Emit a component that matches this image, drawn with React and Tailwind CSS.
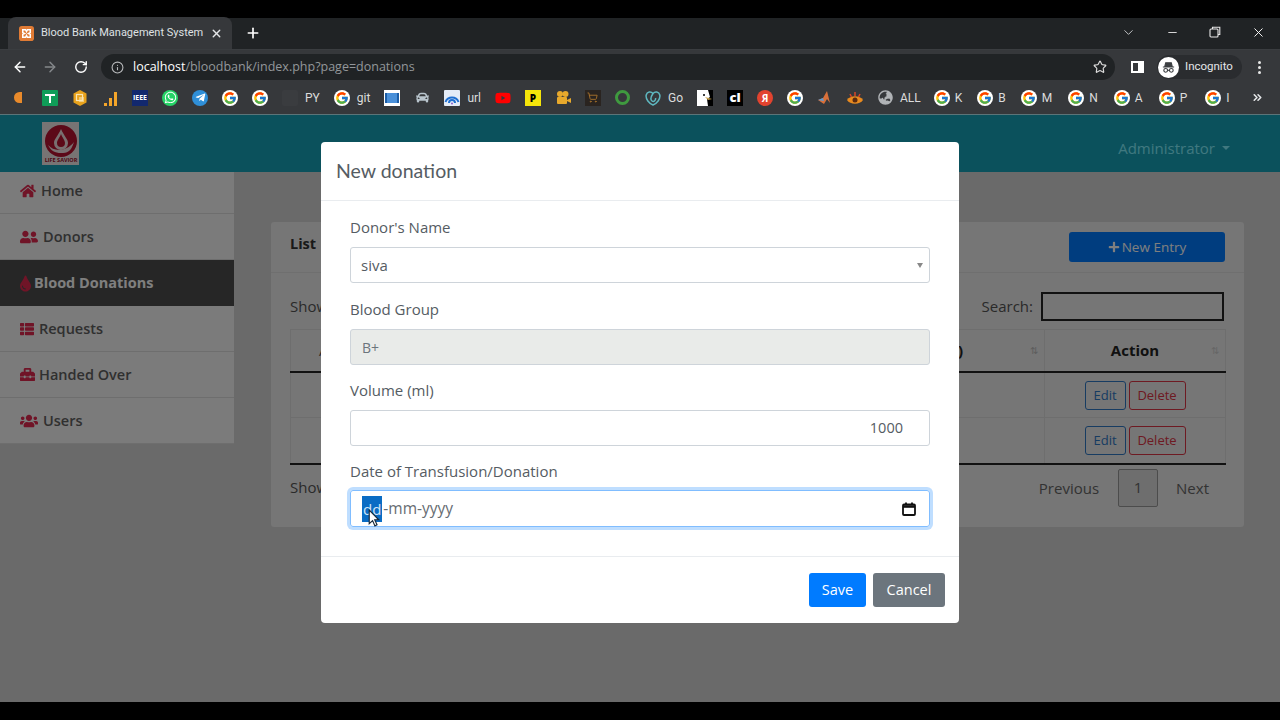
import React from "react";
import { ArrowLeft, ArrowRight, RotateCw, Info, Star, X, Plus, Minus, ChevronDown, ChevronsRight, ShoppingCart } from "lucide-react";
import { FaHome, FaUserFriends, FaTint, FaThList, FaToolbox, FaUsers, FaPlus, FaWhatsapp, FaTelegramPlane, FaYoutube, FaGlobeAsia, FaCar } from "react-icons/fa";
import { FcGoogle } from "react-icons/fc";

function G() {
  return (
    <span className="w-4 h-4 rounded-full bg-white flex items-center justify-center shrink-0">
      <FcGoogle className="w-[14px] h-[14px]" />
    </span>
  );
}

function Box({ className = "", children }) {
  return <span className={"w-4 h-4 flex items-center justify-center shrink-0 " + className}>{children}</span>;
}

function Bm({ children, label, tight, className = "" }) {
  return (
    <div className={"flex items-center shrink-0 " + (tight ? "gap-[7px] " : "gap-[5px] ") + className}>
      {children}
      {label && <span className="text-[12px] leading-4 text-[#dcdcdc] font-['Roboto',sans-serif]">{label}</span>}
    </div>
  );
}

function NavItem({ icon, label, active, first, iconGap = "mr-[5px]" }) {
  return (
    <div
      className={
        "flex items-center pl-[20px] text-[14.5px] " +
        (first ? "h-[42px] pb-[4px] " : "h-[46px] ") +
        (active ? "bg-[#4c4c4c] text-white font-bold" : "bg-[#f6f6f6] text-[#606060] font-semibold border-b border-[#dcdcdc]")
      }
    >
      <span className={"text-[#e0284f] flex items-center " + iconGap}>{icon}</span>
      {label}
    </div>
  );
}

function Label({ children, className = "" }) {
  return <div className={"text-[15px] leading-[21px] text-[#555c63] " + className}>{children}</div>;
}

function ActionCell() {
  return (
    <div className="flex items-center justify-center gap-[3px] pt-[1px]">
      <span className="h-[29px] w-[41px] flex items-center justify-center rounded-[3px] border border-[#2f78c4] text-[#2f78c4] text-[13px]">Edit</span>
      <span className="h-[29px] w-[57px] flex items-center justify-center rounded-[3px] border border-[#dc3545] text-[#dc3545] text-[13px]">Delete</span>
    </div>
  );
}

export default function App() {
  return (
    <div className="w-[1280px] h-[720px] bg-black pt-[18px] pb-[18px] flex flex-col overflow-hidden font-['Open_Sans',sans-serif]">
      {/* tab strip */}
      <div className="h-[32px] bg-[#202325] flex items-end pl-2 pr-[14px] shrink-0 border-b border-[#3a3d40]">
        <div className="h-[32px] w-[224px] bg-[#36383b] rounded-t-lg flex items-center pl-[11px] pr-[9px]">
          <svg viewBox="0 0 16 16" className="w-[15px] h-[15px] shrink-0">
            <rect width="16" height="16" rx="3" fill="#e07b35" />
            <path d="M4 4h3l1 2 1-2h3v3l-2 1 2 1v3H9L8 10l-1 2H4V9l2-1-2-1z" fill="none" stroke="#fff" strokeWidth="1.6" />
          </svg>
          <span className="ml-[7px] pt-px flex-1 text-[11px] text-[#dfe1e3] whitespace-nowrap font-['Roboto',sans-serif]">Blood Bank Management System</span>
          <X className="w-[13px] h-[13px] text-[#e4e6e8]" strokeWidth={2.5} />
        </div>
        <div className="h-[32px] ml-[13px] flex items-center">
          <Plus className="w-[16px] h-[16px] text-white" strokeWidth={2.5} />
        </div>
        <div className="flex-1" />
        <div className="h-[27px] self-start flex items-center gap-[30px] pt-[1px]">
          <ChevronDown className="w-[15px] h-[15px] text-[#c8cacc]" strokeWidth={1.5} />
          <Minus className="w-[13px] h-[13px] text-white" strokeWidth={1.5} />
          <svg viewBox="0 0 12 12" className="w-[12px] h-[12px]" fill="none" stroke="#e8e8e8" strokeWidth="1.1">
            <rect x="1" y="3" width="8" height="8" rx="1" />
            <path d="M3.5 3V1.2h7.3v7.3H9" />
          </svg>
          <X className="w-[15px] h-[15px] text-white" strokeWidth={1.5} />
        </div>
      </div>

      {/* toolbar */}
      <div className="h-[31px] pt-[3px] bg-[#36383b] flex items-center pl-[12px] shrink-0">
        <ArrowLeft className="w-[16px] h-[16px] text-white" strokeWidth={2.2} />
        <ArrowRight className="w-[16px] h-[16px] text-[#85888b] ml-[14px]" strokeWidth={2.2} />
        <RotateCw className="w-[14px] h-[14px] text-white ml-[16px]" strokeWidth={2.4} />
        <div className="ml-[13px] h-[26px] w-[1014px] rounded-full bg-[#202325] flex items-center pl-[10px] pr-[8px]">
          <Info className="w-[13px] h-[13px] text-[#b8babc]" strokeWidth={2} />
          <span className="ml-[9px] text-[12.5px] text-white">localhost</span>
          <span className="text-[12.5px] text-[#93979a]">/bloodbank/index.php?page=donations</span>
          <div className="flex-1" />
          <Star className="w-[14px] h-[14px] text-[#dcdcdc]" strokeWidth={2} />
        </div>
        <div className="ml-[16px] w-[13px] h-[12px] border-2 border-white flex justify-end">
          <div className="w-[4px] bg-white" />
        </div>
        <div className="ml-[13px] h-[24px] w-[85px] rounded-full bg-[#2a2c2f] flex items-center">
          <span className="w-[21px] h-[21px] ml-[1px] rounded-full bg-white flex items-center justify-center shrink-0">
            <svg viewBox="0 0 16 16" className="w-[15px] h-[15px]" fill="none" stroke="#3c3f42" strokeWidth="1.2">
              <path d="M4 7l1-4h6l1 4z M2 7.5h12" fill="#3c3f42" />
              <circle cx="5" cy="11" r="2" />
              <circle cx="11" cy="11" r="2" />
              <path d="M7 11h2" />
            </svg>
          </span>
          <span className="ml-[6px] text-[11.5px] text-[#e4e6e8] font-['Roboto',sans-serif]">Incognito</span>
        </div>
        <div className="ml-[16px] flex flex-col gap-[2px]">
          <span className="w-[3px] h-[3px] rounded-full bg-[#e8e8e8]" />
          <span className="w-[3px] h-[3px] rounded-full bg-[#e8e8e8]" />
          <span className="w-[3px] h-[3px] rounded-full bg-[#e8e8e8]" />
        </div>
      </div>

      {/* bookmarks */}
      <div className="h-[34px] bg-[#36383b] border-b border-[#5c7478] flex items-center pl-[10px] gap-[14px] shrink-0 overflow-hidden">
        <Bm><Box><span className="w-[8px] h-[11px] bg-[#e98a2b] rounded-l-full" /></Box></Bm>
        <Bm className="ml-[2px]">
          <Box className="bg-[#0f9d58] rounded-[1px]">
            <svg viewBox="0 0 16 16" className="w-4 h-4"><path d="M3 5h10M8 5v8" stroke="#fff" strokeWidth="2" /></svg>
          </Box>
        </Bm>
        <Bm>
          <Box>
            <svg viewBox="0 0 16 16" className="w-4 h-4">
              <path d="M8 0l6.5 3.5v9L8 16l-6.5-3.5v-9z" fill="#e8a21c" />
              <rect x="4.5" y="4.5" width="6" height="6" fill="none" stroke="#f8e4b4" strokeWidth="1.2" />
              <rect x="7" y="7" width="5" height="5" fill="#f8e4b4" opacity="0.6" />
            </svg>
          </Box>
        </Bm>
        <Bm>
          <Box className="items-end gap-[2px]">
            <span className="w-[3px] h-[3px] bg-[#f4a52a]" />
            <span className="w-[3px] h-[8px] bg-[#f4a52a]" />
            <span className="w-[3px] h-[14px] bg-[#f4a52a]" />
          </Box>
        </Bm>
        <Bm><Box className="bg-[#12286e]"><span className="text-white text-[7px] font-bold leading-none">IEEE</span></Box></Bm>
        <Bm><Box className="bg-[#25d366] rounded-full"><FaWhatsapp className="w-[13px] h-[13px] text-white" /></Box></Bm>
        <Bm><Box className="bg-[#2f8fd8] rounded-full"><FaTelegramPlane className="w-[11px] h-[11px] text-white" /></Box></Bm>
        <Bm><G /></Bm>
        <Bm><G /></Bm>
        <Bm label="PY" tight><Box className="bg-[#3a3c3f] rounded-[2px]" /></Bm>
        <Bm label="git" tight><G /></Bm>
        <Bm>
          <Box className="bg-white">
            <span className="w-[14px] h-[10px] bg-[#4a90d9] border-x-2 border-[#1d5fa8]" />
          </Box>
        </Bm>
        <Bm><Box><FaCar className="w-[13px] h-[13px] text-[#b8c4cc]" /></Box></Bm>
        <Bm label="url" tight>
          <Box className="bg-[#e4ecf7] rounded-[1px]">
            <svg viewBox="0 0 16 16" className="w-4 h-4" fill="none" stroke="#1f6fd0" strokeWidth="2">
              <path d="M1.5 12a7 7 0 0113 0" />
              <path d="M5 13a3 3 0 016 0" />
              <circle cx="8" cy="13.5" r="1" fill="#8a5fd0" stroke="none" />
            </svg>
          </Box>
        </Bm>
        <Bm><Box><FaYoutube className="w-[16px] h-[16px] text-[#ff0000]" /></Box></Bm>
        <Bm><Box className="bg-[#f5e50a]"><span className="text-black text-[10px] font-extrabold leading-none">P</span></Box></Bm>
        <Bm>
          <Box>
            <svg viewBox="0 0 16 16" className="w-4 h-4" fill="#e8a92c">
              <circle cx="5" cy="4" r="3" />
              <circle cx="10.5" cy="4" r="3" />
              <rect x="2" y="7" width="10" height="7" rx="1" />
              <path d="M12 10l4-2v5l-4-2z" />
            </svg>
          </Box>
        </Bm>
        <Bm><Box className="bg-[#2a2420]"><ShoppingCart className="w-[11px] h-[11px] text-[#a8732c]" /></Box></Bm>
        <Bm><Box><span className="w-[15px] h-[15px] rounded-full border-[3px] border-[#3f9a3f]" /></Box></Bm>
        <Bm label="Go" tight>
          <Box>
            <svg viewBox="0 0 16 16" className="w-4 h-4" fill="none" stroke="#5fb8c0" strokeWidth="1.5">
              <path d="M8 3.5C6 1 2 1.5 1.2 5c-.8 4 3 8.5 6.8 10 3.8-1.5 7.6-6 6.8-10C14 1.5 10 1 8 3.5c-2 3-3 6-1 7.5s4-1 3.5-3" />
            </svg>
          </Box>
        </Bm>
        <Bm>
          <Box className="bg-black">
            <svg viewBox="0 0 16 16" className="w-4 h-4">
              <path d="M0 0h11l2 7-3 2 1 7H0z" fill="#fff" />
              <path d="M8 7l7 2-4 1z" fill="#c9a24a" />
              <circle cx="7" cy="5" r="1" fill="#000" />
            </svg>
          </Box>
        </Bm>
        <Bm><Box className="bg-black"><span className="text-white text-[13px] font-extrabold leading-none">cl</span></Box></Bm>
        <Bm><Box className="bg-[#e2432f] rounded-full"><span className="text-white text-[10px] font-bold leading-none">Я</span></Box></Bm>
        <Bm><G /></Bm>
        <Bm>
          <Box>
            <svg viewBox="0 0 16 16" className="w-4 h-4"><path d="M1 10l5-2 4-7 3 12-3-4-3 5z" fill="#d9703a" /><path d="M1 10l5-2 1 3z" fill="#5f9bd1" /></svg>
          </Box>
        </Bm>
        <Bm>
          <Box>
            <svg viewBox="0 0 16 16" className="w-4 h-4">
              <path d="M0 10c3-5 13-5 16 0-3 5-13 5-16 0z" fill="#e88a1f" />
              <circle cx="8" cy="10" r="2.500" fill="#5a2a10" />
              <path d="M3 4l1.500 3M8 2v4M13 4l-1.500 3" stroke="#d8452a" strokeWidth="1.500" />
            </svg>
          </Box>
        </Bm>
        <Bm label="ALL" tight><Box><FaGlobeAsia className="w-[15px] h-[15px] text-[#b0b3b6]" /></Box></Bm>
        <Bm label="K" className="-ml-[1px]"><G /></Bm>
        <Bm label="B" className="ml-[1px]"><G /></Bm>
        <Bm label="M" className="ml-[1px]"><G /></Bm>
        <Bm label="N" className="ml-[2px]"><G /></Bm>
        <Bm label="A" className="ml-[2px]"><G /></Bm>
        <Bm label="P" className="ml-[2px]"><G /></Bm>
        <Bm label="I" className="ml-[4px]"><G /></Bm>
        <ChevronsRight className="w-[13px] h-[13px] text-[#e4e6e8] ml-[7px] shrink-0" strokeWidth={3} />
      </div>

      {/* page */}
      <div className="relative flex-1 min-h-0 bg-[#d4d4d4] flex flex-col overflow-hidden">
        <div className="h-[57px] bg-[#17a2b8] shrink-0 flex items-center pl-[42px] pr-[50px]">
          <div className="w-[37px] h-[43px] bg-[#f0e8e8] flex items-center justify-center">
            <svg viewBox="0 0 34 40" className="w-[34px] h-[40px]">
              <circle cx="17" cy="17" r="16" fill="#b81230" />
              <path d="M17 5c-3 7-7 10-7 14a7 7 0 0014 0c0-4-4-7-7-14z" fill="#f3dfe0" />
              <path d="M17 10c-1.500 4-4 6-4 9a4 4 0 008 0c0-3-2.500-5-4-9z" fill="#b81230" />
              <path d="M4 21c6 7 18 7 26-3-3 10-7 11-13 11-6 0-10-2-13-8z" fill="#f3dfe0" />
              <text x="17" y="37.500" textAnchor="middle" fontSize="5.500" fontWeight="700" fill="#9c1028">LIFE SAVIOR</text>
            </svg>
          </div>
          <div className="flex-1" />
          <div className="flex items-center pt-[9px]">
            <span className="text-[15px] text-[#80f0ff]">Administrator</span>
            <span className="ml-[7px] w-0 h-0 border-x-[4px] border-x-transparent border-t-[4px] border-t-[#80f0ff]" />
          </div>
        </div>

        <div className="flex flex-1 min-h-0">
          <div className="w-[234px] shrink-0">
            <NavItem first icon={<FaHome className="w-4 h-4" />} label="Home" />
            <NavItem icon={<FaUserFriends className="w-[18px] h-[18px]" />} label="Donors" />
            <NavItem active iconGap="mr-[3px]" icon={<FaTint className="w-[11px] h-[17px]" />} label="Blood Donations" />
            <NavItem icon={<FaThList className="w-[14px] h-[14px]" />} label="Requests" />
            <NavItem iconGap="mr-[4px]" icon={<FaToolbox className="w-[15px] h-[15px]" />} label="Handed Over" />
            <NavItem icon={<FaUsers className="w-[18px] h-[18px]" />} label="Users" />
          </div>

          <div className="flex-1 pl-[37px] pr-[36px] pt-[50px]">
            <div className="bg-[#ececec] h-[305px] rounded-[3px] flex flex-col">
              <div className="h-[51px] border-b border-[#dedede] flex items-center justify-between pl-[19px] pr-[19px] shrink-0">
                <span className="font-bold text-[14.5px] text-[#333] pb-[6px]">List</span>
                <div className="w-[156px] h-[30px] rounded-[3px] bg-[#007bff] text-white text-[13.5px] flex items-center justify-center gap-[2px]">
                  <FaPlus className="w-[12px] h-[12px]" />
                  New Entry
                </div>
              </div>
              <div className="pl-[19px] pr-[18px] flex flex-col">
                <div className="h-[56px] pt-[11px] flex items-center justify-between">
                  <span className="text-[15px] text-[#555]">Show</span>
                  <div className="flex items-center gap-[8px] mr-[2px]">
                    <span className="text-[15px] text-[#555]">Search:</span>
                    <div className="w-[183px] h-[29px] border-2 border-[#222] bg-[#ececec]" />
                  </div>
                </div>
                <table className="w-[935px] table-fixed border-collapse text-[15px] text-[#444]">
                  <colgroup>
                    <col className="w-[754px]" />
                    <col className="w-[181px]" />
                  </colgroup>
                  <tbody>
                    <tr className="h-[42px] border-b-2 border-[#222]">
                      <td className="border-x border-t border-[#dcdcdc] pl-[28px]">
                        <div className="flex items-center pr-[6px]">
                          <span className="text-[#555]">A</span>
                          <div className="flex-1" />
                          <span className="font-bold text-[#222] whitespace-nowrap">Volume (ml)</span>
                          <span className="w-[75px] text-right text-[#bbb] text-[10px]">⇅</span>
                        </div>
                      </td>
                      <td className="border-x border-t border-[#dcdcdc] font-bold text-[#222]">
                        <div className="flex items-center px-[6px]">
                          <div className="flex-1" />
                          <span>Action</span>
                          <span className="flex-1 text-right text-[#ccc] text-[10px] font-normal">⇅</span>
                        </div>
                      </td>
                    </tr>
                    <tr className="h-[46px] border-b border-[#dcdcdc]">
                      <td className="border-x border-[#dcdcdc]" />
                      <td className="border-x border-[#dcdcdc]"><ActionCell /></td>
                    </tr>
                    <tr className="h-[46px] border-b-2 border-[#222]">
                      <td className="border-x border-[#dcdcdc]" />
                      <td className="border-x border-[#dcdcdc]"><ActionCell /></td>
                    </tr>
                  </tbody>
                </table>
                <div className="flex items-center justify-between mt-[4px] h-[38px]">
                  <span className="text-[15px] text-[#555]">Show</span>
                  <div className="flex items-center text-[15px] text-[#666] pr-[17px]">
                    <span className="mt-[1px]">Previous</span>
                    <span className="ml-[19px] w-[40px] h-[38px] flex items-center justify-center border border-[#999] rounded-[2px] bg-[#dcdcdc]">1</span>
                    <span className="ml-[18px] mt-[1px]">Next</span>
                  </div>
                </div>
              </div>
            </div>
          </div>
        </div>

        {/* backdrop + modal */}
        <div className="absolute inset-0 bg-black/50 flex justify-center items-start pt-[27px]">
          <div className="w-[638px] h-[481px] bg-white rounded-[4px] flex flex-col">
            <div className="h-[59px] border-b border-[#e9ecef] flex items-center pl-[15px] shrink-0">
              <span className="text-[19.5px] text-[#555c63] font-['Lato',sans-serif]">New donation</span>
            </div>
            <div className="h-[356px] px-[29px] pt-[16px] shrink-0 border-b border-[#e9ecef]">
              <Label className="mb-[9px]">Donor's Name</Label>
              <div className="h-[36px] border border-[#ced4da] rounded-[3px] flex items-center pl-[10px] pr-[6px] justify-between mb-[16px]">
                <span className="text-[15px] text-[#555c63]">siva</span>
                <span className="w-0 h-0 border-x-[3.5px] border-x-transparent border-t-[5px] border-t-[#888]" />
              </div>
              <Label className="mb-[9px]">Blood Group</Label>
              <div className="h-[36px] border border-[#ced4da] rounded-[3px] bg-[#e9ebe9] flex items-center pl-[11px] mb-[15px]">
                <span className="text-[14px] text-[#6c757d]">B+</span>
              </div>
              <Label className="mb-[9px]">Volume (ml)</Label>
              <div className="h-[36px] border border-[#ced4da] rounded-[3px] flex items-center justify-end pr-[26px] mb-[15px]">
                <span className="text-[14.5px] text-[#555c63]">1000</span>
              </div>
              <Label className="mb-[8px]">Date of Transfusion/Donation</Label>
              <div className="relative h-[37px] border border-[#80bdff] rounded-[3px] shadow-[0_0_0_3px_rgba(0,123,255,0.25)] flex items-center pl-[11px] pr-[13px]">
                <span className="bg-[#0a6cc4] text-[#cfe4f7] text-[15px] leading-[26px] px-px">dd</span>
                <span className="ml-[1px] text-[15.500px] text-[#666c72]">-mm-yyyy</span>
                <div className="flex-1" />
                <svg viewBox="0 0 14 14" className="w-[14px] h-[14px]" fill="none" stroke="#111" strokeWidth="1.8">
                  <rect x="1" y="2.500" width="12" height="10.500" rx="1" />
                  <path d="M1 4.500h12" strokeWidth="2.600" />
                  <path d="M4 0.500v2.500M10 0.500v2.500" />
                </svg>
                <svg viewBox="0 0 12 18" className="absolute left-[17px] top-[18px] w-[13px] h-[19px]">
                  <path d="M1 1v13l3.200-3 2.200 5 2-1-2.200-4.800H10z" fill="#fff" stroke="#1a2a3a" strokeWidth="1.100" />
                </svg>
              </div>
            </div>
            <div className="flex-1 flex items-center justify-end gap-[7px] pr-[14px]">
              <div className="h-[34px] w-[57px] rounded-[3px] bg-[#007bff] text-white text-[14.5px] flex items-center justify-center">Save</div>
              <div className="h-[34px] w-[72px] rounded-[3px] bg-[#6c757d] text-white text-[14.5px] flex items-center justify-center">Cancel</div>
            </div>
          </div>
        </div>
      </div>
    </div>
  );
}
